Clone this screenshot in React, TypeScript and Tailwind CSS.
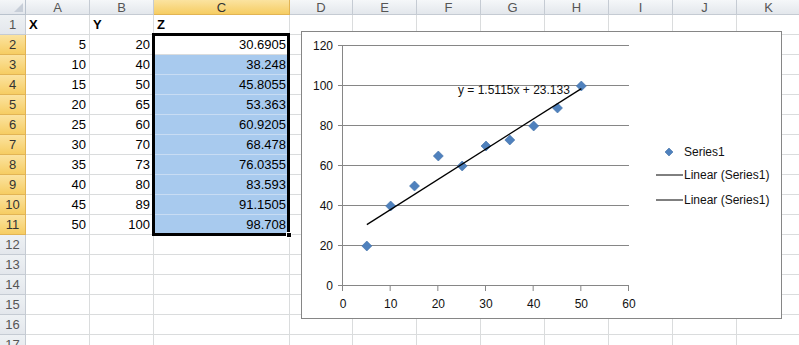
const cols = [
  { key: "A", w: "w-[64px]" },
  { key: "B", w: "w-[64px]" },
  { key: "C", w: "w-[136px]" },
  { key: "D", w: "w-[63px]" },
  { key: "E", w: "w-[64px]" },
  { key: "F", w: "w-[64px]" },
  { key: "G", w: "w-[64px]" },
  { key: "H", w: "w-[64px]" },
  { key: "I", w: "w-[64px]" },
  { key: "J", w: "w-[64px]" },
  { key: "K", w: "w-[64px]" },
];

const data: [number, number, string][] = [
  [5, 20, "30.6905"],
  [10, 40, "38.248"],
  [15, 50, "45.8055"],
  [20, 65, "53.363"],
  [25, 60, "60.9205"],
  [30, 70, "68.478"],
  [35, 73, "76.0355"],
  [40, 80, "83.593"],
  [45, 89, "91.1505"],
  [50, 100, "98.708"],
];

const font = "font-['Liberation_Sans',Arial,sans-serif]";

function cellText(row: number, col: string) {
  if (row === 1) return col === "A" ? "X" : col === "B" ? "Y" : col === "C" ? "Z" : "";
  const d = data[row - 2];
  if (!d) return "";
  if (col === "A") return String(d[0]);
  if (col === "B") return String(d[1]);
  if (col === "C") return d[2];
  return "";
}

// chart coordinates, relative to the chart box
const px = (u: number) => 41 + (u * 286) / 60;
const py = (v: number) => 254 - 2 * v;

function Diamond({ x, y, r = 5 }: { x: number; y: number; r?: number }) {
  return (
    <polygon
      points={`${x},${y - r} ${x + r},${y} ${x},${y + r} ${x - r},${y}`}
      fill="#4f81bd"
      stroke="#3f6ea6"
      strokeWidth="0.6"
    />
  );
}

function Chart() {
  const yTicks = [0, 20, 40, 60, 80, 100, 120];
  const xTicks = [0, 10, 20, 30, 40, 50, 60];
  return (
    <div className="absolute left-[301px] top-[31px] h-[288px] w-[481px] border border-[#868686] bg-white">
      <svg width="479" height="286" className="block" fontFamily="'Liberation Sans', Arial, sans-serif" fontSize="12">
        {yTicks.map((v) => (
          <g key={v}>
            <line x1={36} x2={px(60)} y1={py(v) - 0.5} y2={py(v) - 0.5} stroke="#868686" strokeWidth="1" />
            <text x={31} y={py(v) + 4} textAnchor="end" fill="#111">
              {v}
            </text>
          </g>
        ))}
        <line x1={px(0) - 0.5} x2={px(0) - 0.5} y1={py(120)} y2={py(0)} stroke="#868686" />
        {xTicks.map((u) => (
          <g key={u}>
            <line x1={px(u) - 0.5} x2={px(u) - 0.5} y1={py(0)} y2={py(0) + 5} stroke="#868686" />
            <text x={px(u)} y={py(0) + 22} textAnchor="middle" fill="#111">
              {u}
            </text>
          </g>
        ))}
        {data.map(([u, v]) => (
          <Diamond key={u} x={px(u)} y={py(v)} />
        ))}
        <line
          x1={px(5)}
          y1={py(1.5115 * 5 + 23.133)}
          x2={px(50)}
          y2={py(1.5115 * 50 + 23.133)}
          stroke="#000"
          strokeWidth="1.3"
        />
        <text x={156} y={62} fill="#111">
          y = 1.5115x + 23.133
        </text>

        <Diamond x={367} y={120} r={4} />
        <text x={382} y={124} fill="#111">
          Series1
        </text>
        <line x1={354} x2={381} y1={143} y2={143} stroke="#000" />
        <text x={382} y={147} fill="#111">
          Linear (Series1)
        </text>
        <line x1={354} x2={381} y1={168} y2={168} stroke="#000" />
        <text x={382} y={172} fill="#111">
          Linear (Series1)
        </text>
      </svg>
    </div>
  );
}

export default function App() {
  const rows = Array.from({ length: 17 }, (_, i) => i + 1);
  return (
    <div className={`relative h-[345px] w-[799px] overflow-hidden bg-white ${font} text-[13px] text-black`}>
      <div className="flex h-[15px]">
        <div className="flex w-[26px] shrink-0 items-end justify-end border-b border-r border-[#b9c2cd] bg-[linear-gradient(#f4f6f8,#e2e6ec)] p-[2px]">
          <svg width="9" height="9">
            <polygon points="9,0 9,9 0,9" fill="#c7ced8" />
          </svg>
        </div>
        {cols.map((c) => (
          <div
            key={c.key}
            className={`${c.w} shrink-0 border-b border-r flex items-center justify-center text-[13px] leading-none ${
              c.key === "C"
                ? "border-[#e2b454] bg-[linear-gradient(#fbe3a0,#f6cd63)] text-[#333]"
                : "border-[#c5cbd3] bg-[linear-gradient(#f5f7f9,#e3e7ec)] text-[#555]"
            }`}
          >
            {c.key}
          </div>
        ))}
      </div>
      {rows.map((r) => {
        const sel = r >= 2 && r <= 11;
        return (
          <div key={r} className="flex h-[20px]">
            <div
              className={`w-[26px] shrink-0 border-b border-r flex items-center justify-center pt-[1px] text-[13px] ${
                sel
                  ? "border-[#e2b454] bg-[linear-gradient(#fbe3a0,#f6cd63)] text-[#333]"
                  : "border-[#c5cbd3] bg-[linear-gradient(#eef1f4,#e3e7ec)] text-[#555]"
              }`}
            >
              {r}
            </div>
            {cols.map((c) => {
              const txt = cellText(r, c.key);
              const blue = c.key === "C" && r >= 3 && r <= 11;
              return (
                <div
                  key={c.key}
                  className={`${c.w} shrink-0 border-b border-r border-[#dadcdd] flex items-center px-[3px] pt-[1px] ${
                    r === 1 ? "justify-start font-bold" : "justify-end"
                  } ${blue ? "bg-[#a8caee] border-b-[#c8dcf3]" : ""}`}
                >
                  {txt}
                </div>
              );
            })}
          </div>
        );
      })}
      {/* selection frame around C2:C11 */}
      <div className="pointer-events-none absolute left-[152px] top-[33px] h-[203px] w-[138px] border-[3px] border-black" />
      <div className="absolute left-[286px] top-[232px] h-[6px] w-[6px] border border-white bg-black" />
      <Chart />
    </div>
  );
}
